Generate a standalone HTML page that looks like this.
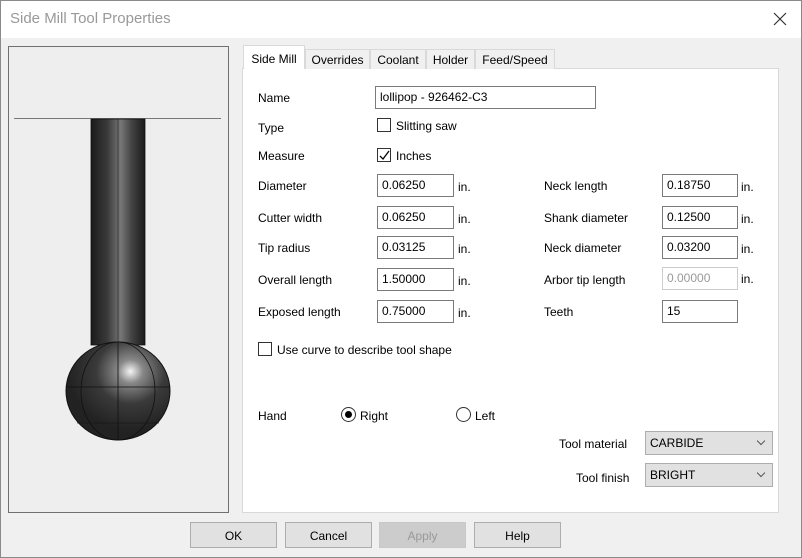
<!DOCTYPE html>
<html><head><style>
*{box-sizing:border-box;margin:0;padding:0}
body{width:802px;height:558px;background:#f0f0f0;font-family:"Liberation Sans",sans-serif;font-size:12px;color:#000;position:relative;overflow:hidden}
.a{position:absolute}
.title{left:0;top:0;width:802px;height:38px;background:#fff}
.inp{position:absolute;background:#fff;border:1px solid #7a7a7a;height:23px;padding:3px 0 0 4px}
.lbl{position:absolute}
.cb{position:absolute;width:14px;height:14px;border:1px solid #333;background:#fff}
.btn{position:absolute;top:522px;width:87px;height:26px;border:1px solid #adadad;background:#e1e1e1;text-align:center;padding-top:6px}
.tab{position:absolute;top:49px;height:20px;border:1px solid #d9d9d9;border-bottom:none;background:#f0f0f0;text-align:center;padding-top:3px}
.dd{position:absolute;left:645px;width:128px;height:24px;border:1px solid #adadad;background:#e1e1e1;padding:4px 0 0 4px}
.dd:after{content:"";position:absolute;right:8px;top:6px;width:5px;height:5px;border-right:1px solid #555;border-bottom:1px solid #555;transform:rotate(45deg)}
.rad{position:absolute;width:15px;height:15px;border:1px solid #333;border-radius:50%;background:#fff}
</style></head><body>
<div class="a title"></div>
<div class="a" style="left:0;top:0;width:802px;height:558px;border:1px solid #8a8a8a;z-index:5;pointer-events:none"></div>
<div class="a" style="left:10px;top:10px;font-size:15px;color:#999">Side Mill Tool Properties</div>
<svg class="a" style="left:772px;top:11px" width="16" height="16"><path d="M2 2L14 14M14 2L2 14" stroke="#333" stroke-width="1.2"/></svg>

<div class="a" style="left:8px;top:46px;width:221px;height:467px;background:#eee;border:1px solid #707070"></div>
<svg class="a" style="left:9px;top:47px" width="219" height="465">
<defs>
<linearGradient id="sh" x1="0" x2="1"><stop offset="0" stop-color="#1a1a1a"/><stop offset=".3" stop-color="#3a3a3a"/><stop offset=".55" stop-color="#777"/><stop offset=".75" stop-color="#444"/><stop offset="1" stop-color="#1a1a1a"/></linearGradient>
<radialGradient id="bl" cx=".62" cy=".3" r=".6"><stop offset="0" stop-color="#f5f5f5"/><stop offset=".2" stop-color="#888"/><stop offset=".55" stop-color="#3a3a3a"/><stop offset="1" stop-color="#222"/></radialGradient>
</defs>
<line x1="5" y1="71.5" x2="212" y2="71.5" stroke="#777"/>
<rect x="82" y="72" width="54" height="226" fill="url(#sh)" stroke="#111" stroke-width=".8"/>
<line x1="109" y1="72" x2="109" y2="298" stroke="#222" stroke-width=".6"/>
<ellipse cx="109" cy="344" rx="52" ry="49" fill="url(#bl)" stroke="#111"/>
<ellipse cx="109" cy="344" rx="37" ry="49" fill="none" stroke="#111" stroke-width=".8"/>
<line x1="57" y1="340" x2="161" y2="340" stroke="#111" stroke-width=".8"/>
<line x1="68" y1="376" x2="150" y2="376" stroke="#111" stroke-width=".6"/>
<line x1="109" y1="296" x2="109" y2="393" stroke="#111" stroke-width=".8"/>
</svg>

<div class="a" style="left:242px;top:68px;width:537px;height:445px;background:#fff;border:1px solid #d9d9d9"></div>
<div class="tab" style="left:243px;top:45px;height:24px;width:62px;background:#fff;padding-top:6px">Side Mill</div>
<div class="tab" style="left:305px;width:65px">Overrides</div>
<div class="tab" style="left:370px;width:56px">Coolant</div>
<div class="tab" style="left:426px;width:49px">Holder</div>
<div class="tab" style="left:475px;width:80px">Feed/Speed</div>

<div class="lbl" style="left:258px;top:91px">Name</div>
<div class="inp" style="left:375px;top:86px;width:221px">lollipop - 926462-C3</div>
<div class="lbl" style="left:258px;top:121px">Type</div>
<div class="cb" style="left:377px;top:118px"></div><div class="lbl" style="left:396px;top:119px">Slitting saw</div>
<div class="lbl" style="left:258px;top:149px">Measure</div>
<div class="cb" style="left:377px;top:148px"></div>
<svg class="a" style="left:378px;top:149px" width="13" height="13"><path d="M2 7L5 10L11 2" stroke="#000" stroke-width="1.3" fill="none"/></svg>
<div class="lbl" style="left:396px;top:149px">Inches</div>

<div class="lbl" style="left:258px;top:179px">Diameter</div><div class="inp" style="left:377px;top:174px;width:77px">0.06250</div><div class="lbl" style="left:458px;top:180px">in.</div>
<div class="lbl" style="left:258px;top:211px">Cutter width</div><div class="inp" style="left:377px;top:206px;width:77px">0.06250</div><div class="lbl" style="left:458px;top:212px">in.</div>
<div class="lbl" style="left:258px;top:241px">Tip radius</div><div class="inp" style="left:377px;top:236px;width:77px">0.03125</div><div class="lbl" style="left:458px;top:242px">in.</div>
<div class="lbl" style="left:258px;top:273px">Overall length</div><div class="inp" style="left:377px;top:268px;width:77px">1.50000</div><div class="lbl" style="left:458px;top:274px">in.</div>
<div class="lbl" style="left:258px;top:305px">Exposed length</div><div class="inp" style="left:377px;top:300px;width:77px">0.75000</div><div class="lbl" style="left:458px;top:306px">in.</div>

<div class="lbl" style="left:544px;top:179px">Neck length</div><div class="inp" style="left:662px;top:174px;width:76px">0.18750</div><div class="lbl" style="left:741px;top:180px">in.</div>
<div class="lbl" style="left:544px;top:211px">Shank diameter</div><div class="inp" style="left:662px;top:206px;width:76px">0.12500</div><div class="lbl" style="left:741px;top:212px">in.</div>
<div class="lbl" style="left:544px;top:241px">Neck diameter</div><div class="inp" style="left:662px;top:236px;width:76px">0.03200</div><div class="lbl" style="left:741px;top:242px">in.</div>
<div class="lbl" style="left:544px;top:273px">Arbor tip length</div><div class="inp" style="left:662px;top:267px;width:76px;border-color:#ccc;color:#999">0.00000</div><div class="lbl" style="left:741px;top:272px">in.</div>
<div class="lbl" style="left:544px;top:305px">Teeth</div><div class="inp" style="left:662px;top:300px;width:76px">15</div>

<div class="cb" style="left:258px;top:342px"></div><div class="lbl" style="left:277px;top:343px">Use curve to describe tool shape</div>

<div class="lbl" style="left:258px;top:409px">Hand</div>
<div class="rad" style="left:341px;top:407px"></div><div class="a" style="left:345px;top:411px;width:7px;height:7px;border-radius:50%;background:#000"></div>
<div class="lbl" style="left:360px;top:409px">Right</div>
<div class="rad" style="left:456px;top:407px"></div><div class="lbl" style="left:475px;top:409px">Left</div>

<div class="lbl" style="left:559px;top:437px">Tool material</div><div class="dd" style="top:431px">CARBIDE</div>
<div class="lbl" style="left:576px;top:471px">Tool finish</div><div class="dd" style="top:463px">BRIGHT</div>

<div class="btn" style="left:190px">OK</div>
<div class="btn" style="left:285px">Cancel</div>
<div class="btn" style="left:379px;color:#999;border-color:#c8c8c8;background:#ccc">Apply</div>
<div class="btn" style="left:474px">Help</div>
</body></html>
